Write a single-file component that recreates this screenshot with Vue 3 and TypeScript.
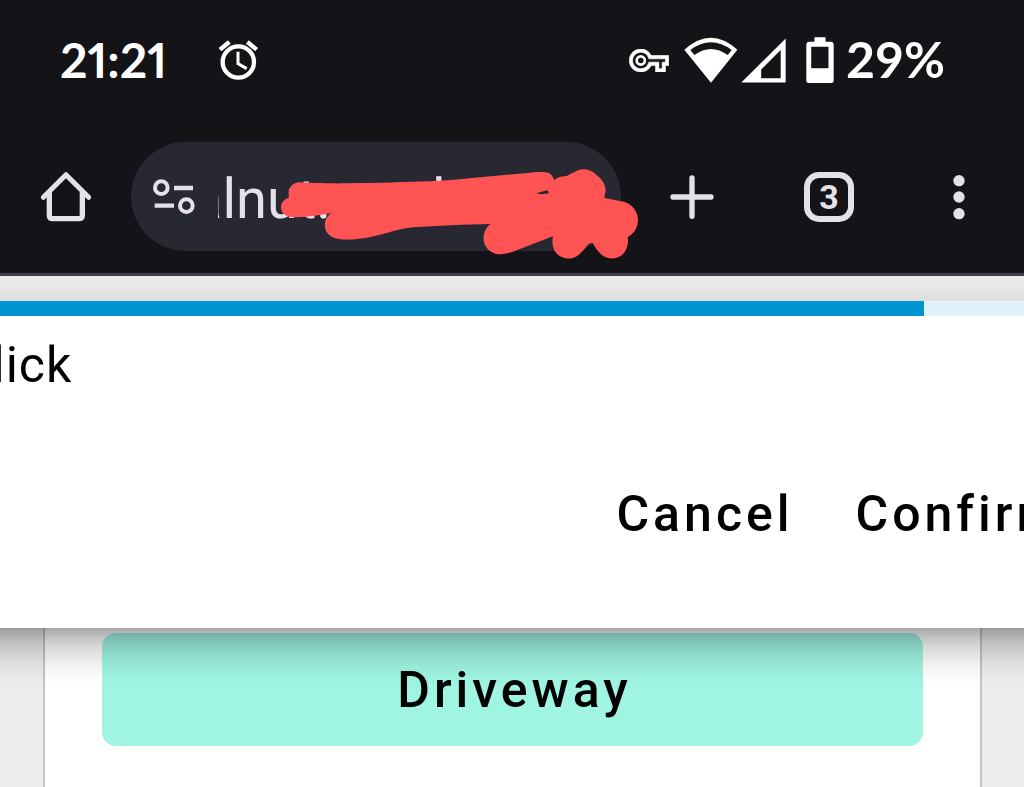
<script setup lang="ts">
import { ref } from 'vue'

const time = ref('21:21')
const battery = ref('29%')
const tabCount = ref(3)
const progress = ref(86)
</script>

<template>
  <div class="screen">
    <header class="chrome">
      <div class="status">
        <span class="time">{{ time }}</span>
        <svg class="alarm" viewBox="534 60 123 126" aria-label="Alarm set">
          <g fill="none" stroke="#fff">
            <circle cx="595" cy="129" r="47" stroke-width="13" />
            <path d="M594 98V134L620 149" stroke-width="9" />
            <path d="M540 92L568 69M622 69L650 92" stroke-width="13" />
          </g>
        </svg>
        <div class="indicators">
          <svg class="key" viewBox="0 5 24 14" aria-label="VPN">
            <path fill="#fff" stroke="#fff" stroke-width="0.4" fill-rule="evenodd" d="M22 19h-6v-4h-2.68c-1.14 2.42-3.6 4-6.32 4-3.86 0-7-3.14-7-7s3.14-7 7-7c2.72 0 5.17 1.58 6.32 4H24v6h-2v4zm-4-2h2v-4h2v-2H11.94l-.23-.67C11.01 8.34 9.11 7 7 7c-2.76 0-5 2.24-5 5s2.24 5 5 5c2.11 0 4.01-1.34 4.71-3.33l.23-.67H18v4z" />
            <circle cx="7" cy="12" r="2.5" fill="none" stroke="#fff" stroke-width="1.6" />
          </svg>
          <svg class="wifi" viewBox="196 50 162 138" aria-label="Wi-Fi">
            <path fill="#fff" fill-rule="evenodd" d="M197 88Q277 16 356 88L277 187ZM215 89L227 104Q277 68 327 104L339 89Q277 43 215 89Z" />
          </svg>
          <svg class="signal" viewBox="368 52 136 135" aria-label="Mobile signal">
            <path fill="#fff" fill-rule="evenodd" d="M369 186L503 53V186ZM429 147V173H488V88Z" />
          </svg>
          <svg class="cell" viewBox="562 46 86 144" aria-label="Battery">
            <path fill="#fff" fill-rule="evenodd" d="M588 48H622V62H638Q647 62 647 71V180Q647 189 638 189H572Q563 189 563 180V71Q563 62 572 62H588ZM578 77V143H631V77Z" />
          </svg>
          <span class="level">{{ battery }}</span>
        </div>
      </div>

      <nav class="toolbar" aria-label="Browser">
        <button class="tool" type="button" aria-label="Home">
          <svg viewBox="42 105 192 192" fill="none" stroke="#e5e1e9">
            <path d="M70 202L138 134L206 202" stroke-width="15" stroke-linecap="round" stroke-linejoin="round" />
            <path d="M88 186V256Q88 266 98 266H177Q187 266 187 256V186" stroke-width="16" />
          </svg>
        </button>
        <div class="address">
          <svg class="tune" viewBox="396 144 132 111" fill="none" stroke="#e5e1e9" aria-hidden="true">
            <circle cx="424" cy="173" r="19" stroke-width="12" />
            <circle cx="499" cy="227" r="19" stroke-width="12" />
            <path d="M462 174H519M404 227H462" stroke-width="13" />
          </svg>
          <div class="url"><span class="text">alnut.</span><span class="tail">l</span></div>
          <svg class="scribble" viewBox="0 0 1140 450" aria-hidden="true">
            <path fill="#ff5354" d="M88 157C120 158 160 161 230 160C320 159 410 156 480 154C560 150 670 138 780 128C805 126 825 125 836 129C845 133 851 142 852 151C862 142 870 139 890 138C910 129 925 118 940 118C955 118 968 124 980 135C996 148 1006 163 1007 180L1003 204L1062 215C1088 223 1104 246 1104 270C1104 292 1092 312 1073 321C1077 345 1068 367 1052 378C1032 390 1006 387 990 370C980 360 974 350 969 340Q962 337 955 343C945 355 935 370 918 380C895 392 866 384 854 362C847 350 846 334 849 319L728 365C706 373 690 374 676 371C650 363 638 342 641 318C643 301 651 289 662 282C590 283 500 288 430 292C380 297 330 318 280 325C240 331 205 330 188 322C168 312 161 293 166 273C169 263 175 255 185 249C145 256 105 264 62 261C44 258 33 248 33 232C33 217 43 207 58 203C54 190 56 176 66 166C73 160 80 158 88 157Z" />
            <path fill="#282833" d="M798 190L832 181L837 190Q815 195 798 190Z" />
          </svg>
        </div>
        <button class="tool" type="button" aria-label="New tab">
          <svg viewBox="59 44 192 192" fill="none" stroke="#e5e1e9">
            <path d="M98 140H212M155 83V198" stroke-width="16" stroke-linecap="round" />
          </svg>
        </button>
        <button class="tool tabs" type="button" aria-label="Open tabs">
          <span class="count">{{ tabCount }}</span>
        </button>
        <button class="tool" type="button" aria-label="Menu">
          <svg viewBox="861 44 192 192" fill="#e5e1e9">
            <circle cx="957" cy="91" r="17" />
            <circle cx="957" cy="140" r="17" />
            <circle cx="957" cy="190" r="17" />
          </svg>
        </button>
      </nav>
    </header>

    <main class="page">
      <section class="dialog" role="dialog" aria-label="Confirmation">
        <div class="track" role="progressbar" :aria-valuenow="progress">
          <div class="fill" :style="{ width: progress + '%' }"></div>
        </div>
        <p class="message">Click</p>
        <div class="actions">
          <button type="button">Cancel</button>
          <button type="button">Confirm</button>
        </div>
      </section>
      <section class="card">
        <button class="place" type="button">Driveway</button>
      </section>
    </main>
  </div>
</template>

<style>
body {
  margin: 0;
}
</style>

<style scoped>
.screen {
  display: flex;
  flex-direction: column;
  min-height: 100vh;
  overflow: hidden;
  background: #ededed;
  font-family: Roboto, "Liberation Sans", sans-serif;
  color: #000;
}

button {
  border: 0;
  padding: 0;
  background: none;
  font: inherit;
  color: inherit;
  cursor: pointer;
}

svg {
  display: block;
  flex: none;
}

.chrome {
  position: relative;
  z-index: 2;
  background: #141318;
  border-bottom: 3px solid #403e49;
}

.status {
  display: flex;
  align-items: center;
  height: 120px;
  padding: 0 79px 0 60px;
  color: #fff;
  font-family: Lato, "Open Sans", sans-serif;
  font-weight: 700;
  font-size: 50px;
  line-height: 60px;
}

.time {
  width: 158px;
  font-size: 48px;
  font-variant-numeric: proportional-nums;
}

.alarm {
  width: 41px;
  height: 42px;
}

.indicators {
  display: flex;
  align-items: center;
  margin-left: auto;
}

.key {
  width: 40px;
  height: 23px;
  margin-right: 15px;
}

.wifi {
  width: 54px;
  height: 46px;
  margin-right: 3px;
}

.signal {
  width: 45px;
  height: 45px;
  margin-right: 20px;
}

.cell {
  width: 28px;
  height: 48px;
  margin-right: 12px;
}

.level {
  padding-bottom: 2px;
}

.toolbar {
  display: flex;
  align-items: center;
  height: 109px;
  padding: 22px 33px 22px 34px;
}

.tool {
  display: flex;
  align-items: center;
  justify-content: center;
  flex: none;
  width: 64px;
  height: 64px;
}

.tool svg {
  width: 64px;
  height: 64px;
}

.address {
  position: relative;
  display: flex;
  align-items: center;
  flex: 1;
  height: 109px;
  margin: 0 39px 0 33px;
  border-radius: 55px;
  background: #282833;
  color: #e5e1e9;
}

.tune {
  width: 44px;
  height: 37px;
  margin-left: 21px;
}

.url {
  display: flex;
  margin-left: 22px;
  padding-top: 4px;
  overflow: hidden;
  font-size: 56px;
  line-height: 64px;
}

.text {
  margin-left: -29px;
  padding-left: 3px;
}

.tail {
  margin-left: 101px;
}

.scribble {
  position: absolute;
  left: 139px;
  top: -12px;
  width: 380px;
  height: 150px;
}

.tabs {
  margin: 0 66px 0 73px;
}

.count {
  box-sizing: border-box;
  width: 50px;
  height: 50px;
  border: 6px solid #e5e1e9;
  border-radius: 15px;
  color: #e5e1e9;
  font-size: 34px;
  font-weight: 700;
  line-height: 38px;
}

.page {
  display: flex;
  flex-direction: column;
  flex: 1;
  padding-top: 25px;
}

.dialog {
  position: relative;
  z-index: 1;
  margin: 0 -60px;
  background: #fff;
  box-shadow: 0 15px 15px -9px rgba(0, 0, 0, 0.2), 0 25px 31px 3px rgba(0, 0, 0, 0.14), 0 9px 43px 6px rgba(0, 0, 0, 0.12);
}

.track {
  height: 15px;
  background: #dff1f9;
}

.fill {
  height: 100%;
  background: #0094d0;
}

.message {
  margin: 0;
  padding: 19px 0 0 19px;
  font-size: 50px;
  line-height: 60px;
  letter-spacing: 1px;
}

.actions {
  display: flex;
  justify-content: flex-end;
  gap: 62px;
  padding: 88px 20px 83px;
  font-size: 50px;
  font-weight: 500;
  line-height: 62px;
}

.actions button {
  letter-spacing: 4px;
}

.card {
  flex: 1;
  margin: 0 42px 0 43px;
  padding: 5px 57px 41px;
  border: solid #c4c4c4;
  border-width: 0 2px;
  background: #fff;
}

.place {
  display: block;
  width: 100%;
  height: 113px;
  padding-left: 4px;
  border-radius: 14px;
  background: #a0f5e2;
  font-size: 50px;
  font-weight: 500;
  letter-spacing: 4px;
}
</style>
